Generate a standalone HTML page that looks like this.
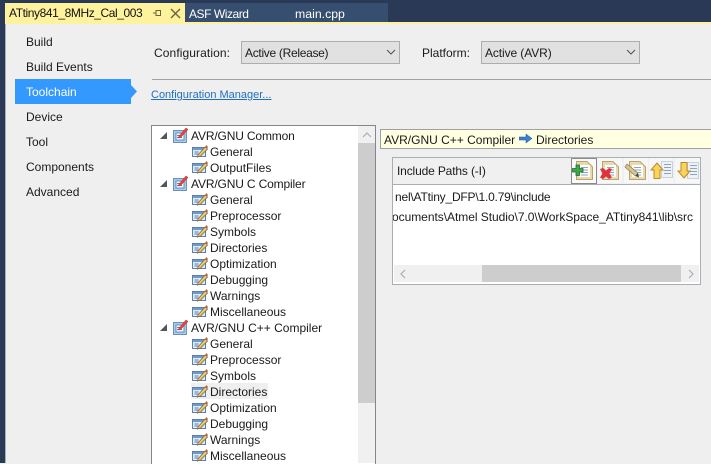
<!DOCTYPE html>
<html><head><meta charset="utf-8">
<style>
html,body{margin:0;padding:0}
body{width:711px;height:463px;overflow:hidden;position:relative;background:#efefef;font-family:"Liberation Sans",sans-serif;font-size:12px;color:#1a1a1a}
div,span.a,svg.a{position:absolute}
.t{white-space:nowrap;line-height:16px;height:16px}
.n{left:26px;height:16px;line-height:16px;white-space:nowrap}
.r{left:191px}
.c{left:210px}
.ri{position:absolute;left:173px;overflow:visible}
.ci{position:absolute;left:192px;overflow:visible}
.tri{position:absolute;left:160px}
</style></head><body>
<svg width="0" height="0" style="position:absolute">
<defs>
<g id="root"><rect x="0.5" y="3.5" width="13" height="12" fill="#a9c8ea" stroke="#6a92c2"/><rect x="3" y="6" width="8" height="7" fill="#eef4fb" stroke="#5c7fae" stroke-width="0.8"/><path d="M4 8.5h5M4 10.5h5" stroke="#5b7fb0" stroke-width="0.9"/><path d="M6 9 L13 1 L15 2.5 L8 10 L5.5 10.8Z" fill="#e8443a" stroke="#b52a22" stroke-width="0.5"/></g>
<g id="child"><rect x="0.5" y="3.5" width="13" height="9" fill="#dfeafa" stroke="#5f7fa8"/><rect x="1" y="4" width="12" height="2" fill="#6f9bd4"/><path d="M2.5 8h4M2.5 10h4" stroke="#5f7fa8"/><path d="M6 11 L13 3 L15.5 5 L8.5 12 L5.5 13Z" fill="#eccb70" stroke="#7a6a45" stroke-width="0.8"/><path d="M13 3 L14.5 1 L16 3 L15 4.5Z" fill="#b06a50"/></g>
<path id="tri" d="M7 0 V7 H0Z" fill="#555"/>
<g id="doc"><path d="M0.5 2.5H11L16.5 8V20.5H0.5Z" fill="#e9d9ae" stroke="#bba36c"/><rect x="3" y="6" width="11" height="12" fill="#fdfdfb"/><path d="M5 8.5h7M5 11h7M5 13.5h7M5 16h7" stroke="#8ea5c0"/></g>
</defs>
</svg>

<!-- top bar -->
<div style="left:0;top:0;width:711px;height:24px;background:#2a3a56"></div>
<div style="left:0;top:24px;width:5px;height:439px;background:#2a3a56"></div>
<div style="left:5px;top:24px;width:1px;height:439px;background:#a9adb5"></div>
<div style="left:5px;top:3px;width:180px;height:20px;background:#fff29d"></div>
<div style="left:5px;top:22px;width:706px;height:2px;background:#fff29d"></div>
<div style="left:185px;top:3px;width:203px;height:19px;background:#364e6f"></div>
<div class="t" style="left:9px;top:5px;color:#111;letter-spacing:-.42px">ATtiny841_8MHz_Cal_003</div>
<svg class="a" style="left:152px;top:8px" width="10" height="10"><path d="M1 5H4M4 2.5V7.5H8.5V2.5Z" fill="none" stroke="#6b6240"/></svg>
<svg class="a" style="left:170px;top:8px" width="11" height="11"><path d="M1 1L10 10M10 1L1 10" stroke="#6b6240" stroke-width="1.4"/></svg>
<div class="t" style="left:189px;top:6px;color:#fff;letter-spacing:-.45px">ASF Wizard</div>
<div class="t" style="left:295px;top:6px;color:#fff;font-size:12.3px">main.cpp</div>

<!-- nav -->
<div class="n" style="top:34px">Build</div>
<div class="n" style="top:59px">Build Events</div>
<div style="left:15px;top:79px;width:116px;height:25px;background:#3399ff"></div>
<svg class="a" style="left:131px;top:85px" width="7" height="14"><path d="M0 0L6 6.5L0 13Z" fill="#3399ff"/></svg>
<div class="n" style="top:84px;color:#fff">Toolchain</div>
<div class="n" style="top:109px">Device</div>
<div class="n" style="top:134px">Tool</div>
<div class="n" style="top:159px">Components</div>
<div class="n" style="top:184px">Advanced</div>

<!-- config row -->
<div class="t" style="left:154px;top:45px;letter-spacing:.1px">Configuration:</div>
<div style="left:241px;top:41px;width:157px;height:21px;background:#e1e1e1;border:1px solid #adadad"></div>
<div class="t" style="left:245px;top:45px;letter-spacing:-.3px">Active (Release)</div>
<svg class="a" style="left:386px;top:49px" width="10" height="7"><path d="M1 1L5 5L9 1" fill="none" stroke="#555" stroke-width="1.1"/></svg>
<div class="t" style="left:422px;top:45px">Platform:</div>
<div style="left:481px;top:41px;width:157px;height:21px;background:#e1e1e1;border:1px solid #adadad"></div>
<div class="t" style="left:485px;top:45px;letter-spacing:-.1px">Active (AVR)</div>
<svg class="a" style="left:626px;top:49px" width="10" height="7"><path d="M1 1L5 5L9 1" fill="none" stroke="#555" stroke-width="1.1"/></svg>
<div style="left:152px;top:79px;width:559px;height:1px;background:#a0a0a0"></div>
<div class="t" style="left:151px;top:87px;color:#1f6fc0;font-size:11px;text-decoration:underline">Configuration Manager...</div>

<!-- tree -->
<div style="left:151px;top:125px;width:223px;height:338px;background:#fff;border:1px solid #82878f;border-bottom:none"></div>
<div style="left:358px;top:126px;width:17px;height:337px;background:#f0f0f0"></div>
<div style="left:358px;top:143px;width:17px;height:260px;background:#cdcdcd"></div>
<svg class="a" style="left:362px;top:132px" width="10" height="7"><path d="M1 5L5 1L9 5" fill="none" stroke="#a8a8a8" stroke-width="1.1"/></svg>
<div style="left:191px;top:383px;width:77px;height:16px;background:#efefef"></div>

<svg class="tri" style="top:132px" width="8" height="8"><use href="#tri"/></svg>
<svg class="ri" style="top:127px" width="16" height="17"><use href="#root"/></svg>
<div class="t r" style="top:128px;letter-spacing:-.15px">AVR/GNU Common</div>
<svg class="ci" style="top:144px" width="17" height="16"><use href="#child"/></svg><div class="t c" style="top:144px">General</div>
<svg class="ci" style="top:160px" width="17" height="16"><use href="#child"/></svg><div class="t c" style="top:160px">OutputFiles</div>

<svg class="tri" style="top:180px" width="8" height="8"><use href="#tri"/></svg>
<svg class="ri" style="top:175px" width="16" height="17"><use href="#root"/></svg>
<div class="t r" style="top:176px;letter-spacing:-.15px">AVR/GNU C Compiler</div>
<svg class="ci" style="top:192px" width="17" height="16"><use href="#child"/></svg><div class="t c" style="top:192px">General</div>
<svg class="ci" style="top:208px" width="17" height="16"><use href="#child"/></svg><div class="t c" style="top:208px">Preprocessor</div>
<svg class="ci" style="top:224px" width="17" height="16"><use href="#child"/></svg><div class="t c" style="top:224px">Symbols</div>
<svg class="ci" style="top:240px" width="17" height="16"><use href="#child"/></svg><div class="t c" style="top:240px">Directories</div>
<svg class="ci" style="top:256px" width="17" height="16"><use href="#child"/></svg><div class="t c" style="top:256px">Optimization</div>
<svg class="ci" style="top:272px" width="17" height="16"><use href="#child"/></svg><div class="t c" style="top:272px">Debugging</div>
<svg class="ci" style="top:288px" width="17" height="16"><use href="#child"/></svg><div class="t c" style="top:288px">Warnings</div>
<svg class="ci" style="top:304px" width="17" height="16"><use href="#child"/></svg><div class="t c" style="top:304px">Miscellaneous</div>

<svg class="tri" style="top:324px" width="8" height="8"><use href="#tri"/></svg>
<svg class="ri" style="top:319px" width="16" height="17"><use href="#root"/></svg>
<div class="t r" style="top:320px">AVR/GNU C++ Compiler</div>
<svg class="ci" style="top:336px" width="17" height="16"><use href="#child"/></svg><div class="t c" style="top:336px">General</div>
<svg class="ci" style="top:352px" width="17" height="16"><use href="#child"/></svg><div class="t c" style="top:352px">Preprocessor</div>
<svg class="ci" style="top:368px" width="17" height="16"><use href="#child"/></svg><div class="t c" style="top:368px">Symbols</div>
<svg class="ci" style="top:384px" width="17" height="16"><use href="#child"/></svg><div class="t c" style="top:384px">Directories</div>
<svg class="ci" style="top:400px" width="17" height="16"><use href="#child"/></svg><div class="t c" style="top:400px">Optimization</div>
<svg class="ci" style="top:416px" width="17" height="16"><use href="#child"/></svg><div class="t c" style="top:416px">Debugging</div>
<svg class="ci" style="top:432px" width="17" height="16"><use href="#child"/></svg><div class="t c" style="top:432px">Warnings</div>
<svg class="ci" style="top:448px" width="17" height="16"><use href="#child"/></svg><div class="t c" style="top:448px">Miscellaneous</div>

<!-- right panel -->
<div style="left:380px;top:129px;width:331px;height:18px;background:#ffffe1;border:1px solid #a0a0a0;border-right:none"></div>
<div class="t" style="left:384px;top:132px">AVR/GNU C++ Compiler</div>
<svg class="a" style="left:519px;top:133px" width="14" height="12"><path d="M0 4H7V1L13 5.5L7 10V7H0Z" fill="#3d7fd6" stroke="#25518f" stroke-width="0.5"/></svg>
<div class="t" style="left:536px;top:132px">Directories</div>

<div style="left:392px;top:157px;width:307px;height:126px;background:#fff;border:1px solid #a9aeb6;box-sizing:content-box"></div>
<div style="left:393px;top:158px;width:307px;height:26px;background:#f0f0f0;border-bottom:1px solid #a9aeb6"></div>
<div class="t" style="left:397px;top:163px;letter-spacing:-.15px">Include Paths (-I)</div>

<div style="left:571px;top:158px;width:24px;height:24px;background:#fafafa;border:1px solid #8a8a8a"></div>
<svg class="a" style="left:571px;top:159px" width="26" height="24"><use href="#doc" x="5"/><path d="M5 6h3.5v3.5H12v3.5H8.5V16.5H5V13H1.5V9.500H5Z" fill="#3ea848" stroke="#1f6b2a" stroke-width="0.8"/></svg>
<div style="left:598px;top:158px;width:24px;height:25px;background:#f7f7f7"></div>
<svg class="a" style="left:597px;top:159px" width="26" height="24"><use href="#doc" x="5"/><path d="M3 10L6 9L9 11.500L12 9L15 10L12.500 14.500L15 18.500L12 20L9 17.500L6 20L3 18.500L5.500 14.500Z" fill="#e0323c"/></svg>
<div style="left:623.500px;top:158px;width:24px;height:25px;background:#f7f7f7"></div>
<svg class="a" style="left:623px;top:159px" width="26" height="24"><use href="#doc" x="6"/><path d="M4 5L15 14L12.500 17L2 8Z" fill="#d9c48f" stroke="#8b7d58" stroke-width="0.7"/><path d="M12.500 17L15 14L16 18.500Z" fill="#444"/></svg>
<div style="left:649px;top:158px;width:24px;height:25px;background:#f7f7f7"></div>
<svg class="a" style="left:649px;top:159px" width="26" height="24"><rect x="12.500" y="2.500" width="11" height="16" fill="#eef2f7" stroke="#c9d0da"/><path d="M15 5.500h7M15 8.500h7M15 11.500h7M15 14.500h7" stroke="#8ea5c0"/><path d="M8 4L14 11H11V19.500H5V11H2Z" fill="#fbd35b" stroke="#b88a2a"/></svg>
<div style="left:675px;top:158px;width:25px;height:25px;background:#f7f7f7"></div>
<svg class="a" style="left:675px;top:159px" width="26" height="24"><rect x="12.500" y="3.500" width="11" height="16" fill="#eef2f7" stroke="#c9d0da"/><path d="M15 6.500h7M15 9.500h7M15 12.500h7M15 15.500h7" stroke="#8ea5c0"/><path d="M9 19L15 12H12V3.500H6V12H3Z" fill="#fbd35b" stroke="#b88a2a"/></svg>

<div style="left:393px;top:185px;width:307px;height:80px;overflow:hidden">
<div class="t" style="left:2px;top:4px;letter-spacing:-.2px">nel\ATtiny_DFP\1.0.79\include</div>
<div class="t" style="left:-1px;top:24px;letter-spacing:-.04px">ocuments\Atmel Studio\7.0\WorkSpace_ATtiny841\lib\src</div>
</div>
<div style="left:394px;top:265px;width:305px;height:17px;background:#f0f0f0"></div>
<div style="left:482px;top:265px;width:199px;height:17px;background:#cdcdcd"></div>
<svg class="a" style="left:400px;top:269px" width="7" height="10"><path d="M5 1L1 5L5 9" fill="none" stroke="#a8a8a8" stroke-width="1.1"/></svg>
<svg class="a" style="left:688px;top:269px" width="7" height="10"><path d="M1 1L5 5L1 9" fill="none" stroke="#a8a8a8" stroke-width="1.1"/></svg>
</body></html>
